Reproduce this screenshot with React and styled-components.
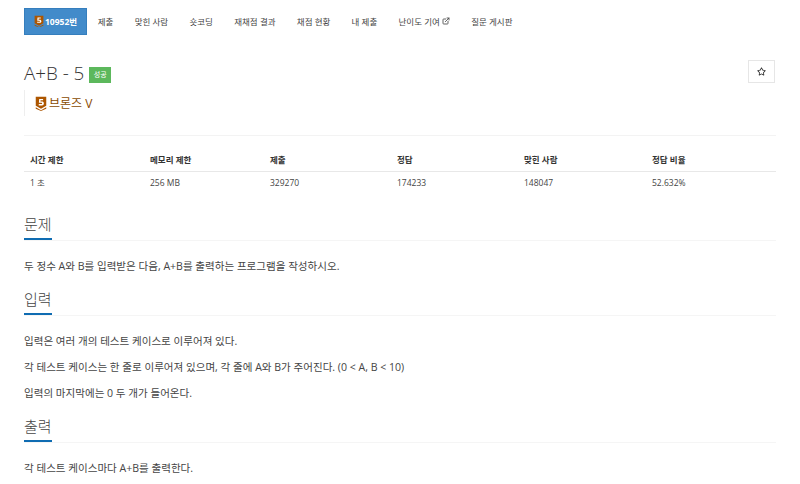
import React from "react";
import styled, { createGlobalStyle } from "styled-components";
import { ExternalLink } from "lucide-react";
import { FaRegStar } from "react-icons/fa";

const GlobalStyle = createGlobalStyle`
  html, body {
    margin: 0;
    padding: 0;
    background: #fff;
    overflow: hidden;
  }
  body {
    font-family: "Open Sans", "Noto Sans CJK KR", sans-serif;
    color: #333;
  }
`;

const Page = styled.div`
  width: 800px;
  height: 484px;
  box-sizing: border-box;
  padding: 8px 24px 0;
  overflow: hidden;
`;

const Tabs = styled.nav`
  display: flex;
  height: 27px;
  align-items: stretch;
`;

const Tab = styled.a`
  display: flex;
  align-items: center;
  gap: ${(p) => (p.$active ? "1px" : "2px")};
  padding: 0 ${(p) => (p.$active ? "9px" : "10.65px")} 1px;
  font-size: 8.5px;
  font-weight: ${(p) => (p.$active ? 700 : 400)};
  color: ${(p) => (p.$active ? "#fff" : "#444")};
  background: ${(p) => (p.$active ? "#428bca" : "transparent")};
  border: ${(p) => (p.$active ? "1px solid #357ebd" : "none")};
  box-sizing: border-box;
  white-space: nowrap;
`;

const TitleRow = styled.div`
  display: flex;
  justify-content: space-between;
  align-items: flex-start;
  margin-top: 26px;
`;

const TitleGroup = styled.div`
  display: flex;
  align-items: center;
  gap: 5px;
  height: 25px;
`;

const Title = styled.h1`
  margin: 0;
  font-size: 18.8px;
  font-weight: 300;
  line-height: 25px;
  color: #333;
`;

const Label = styled.span`
  background: #5cb85c;
  color: #fff;
  font-size: 7px;
  line-height: 16px;
  width: 22px;
  height: 16px;
  margin-top: 3px;
  text-align: center;
`;

const StarButton = styled.button`
  width: 27px;
  height: 23px;
  margin-top: -1px;
  margin-right: 1px;
  padding: 0;
  display: flex;
  align-items: center;
  justify-content: center;
  background: #fff;
  border: 1px solid #e6e6e6;
  color: #222;
  font-size: 9px;
`;

const Tier = styled.div`
  display: flex;
  align-items: center;
  gap: 2px;
  height: 26px;
  margin-top: 4px;
  padding-left: 10px;
  border-left: 1px solid #eee;
  color: #8a4b00;
  font-size: 12px;
`;

const Rule = styled.hr`
  margin: 19px 0 0;
  border: none;
  border-top: 1px solid #f3f3f3;
`;

const InfoTable = styled.div`
  display: grid;
  grid-template-columns: 120px 120px 127px 127px 128px 1fr;
  margin-top: 12px;
`;

const HeadCell = styled.div`
  padding: 0 6px;
  height: 23px;
  line-height: 24px;
  font-size: 8.5px;
  font-weight: 700;
  color: #333;
  border-bottom: 1px solid #e8e8e8;
`;

const Cell = styled.div`
  padding: 0 6px;
  height: 23px;
  line-height: 22px;
  font-size: 8.5px;
  color: #444;
`;

const Section = styled.section`
  margin-top: ${(p) => p.$top || 0}px;
`;

const Heading = styled.div`
  height: 28px;
  border-bottom: 1px solid #f5f5f5;
`;

const HeadingText = styled.h2`
  display: inline-block;
  margin: 0;
  height: 26px;
  line-height: 24px;
  font-size: 15px;
  font-weight: 300;
  color: #444;
  border-bottom: 2px solid #0f6cb2;
`;

const Body = styled.div`
  margin-top: 12px;
`;

const Para = styled.p`
  margin: 0;
  height: 26px;
  line-height: 26px;
  font-size: 10.55px;
  color: #444;
  white-space: nowrap;
`;

function TierIcon({ size }) {
  return (
    <svg width={size} height={size * 1.25} viewBox="0 0 16 20">
      <path d="M1 1h14v12l-7 4-7-4z" fill="#ad5600" />
      <path d="M1 15l7 4 7-4v2l-7 3-7-3z" fill="#ad5600" />
      <path d="M10.8 4H5.6l-.4 5h3.3c.8 0 1 .4 1 .9s-.3.9-1 .9H5v1.7h4.2c1.6 0 2.6-1 2.6-2.6S10.800 7.400 9.200 7.400H7.300l.1-1.700h3.400z" fill="#fff" />
    </svg>
  );
}

const tabs = ["제출", "맞힌 사람", "숏코딩", "재채점 결과", "채점 현황", "내 제출"];
const heads = ["시간 제한", "메모리 제한", "제출", "정답", "맞힌 사람", "정답 비율"];
const values = ["1 초", "256 MB", "329270", "174233", "148047", "52.632%"];

export default function App() {
  return (
    <Page>
      <GlobalStyle />
      <Tabs>
        <Tab $active>
          <TierIcon size={10} />
          10952번
        </Tab>
        {tabs.map((t) => (
          <Tab key={t}>{t}</Tab>
        ))}
        <Tab>
          난이도 기여 <ExternalLink size={8} strokeWidth={2.5} />
        </Tab>
        <Tab>질문 게시판</Tab>
      </Tabs>

      <TitleRow>
        <TitleGroup>
          <Title>A+B - 5</Title>
          <Label>성공</Label>
        </TitleGroup>
        <StarButton>
          <FaRegStar />
        </StarButton>
      </TitleRow>

      <Tier>
        <TierIcon size={12} />
        브론즈 V
      </Tier>

      <Rule />

      <InfoTable>
        {heads.map((h) => (
          <HeadCell key={h}>{h}</HeadCell>
        ))}
        {values.map((v) => (
          <Cell key={v}>{v}</Cell>
        ))}
      </InfoTable>

      <Section $top={17}>
        <Heading>
          <HeadingText>문제</HeadingText>
        </Heading>
        <Body>
          <Para>두 정수 A와 B를 입력받은 다음, A+B를 출력하는 프로그램을 작성하시오.</Para>
        </Body>
      </Section>

      <Section $top={8}>
        <Heading>
          <HeadingText>입력</HeadingText>
        </Heading>
        <Body>
          <Para>입력은 여러 개의 테스트 케이스로 이루어져 있다.</Para>
          <Para>각 테스트 케이스는 한 줄로 이루어져 있으며, 각 줄에 A와 B가 주어진다. (0 &lt; A, B &lt; 10)</Para>
          <Para>입력의 마지막에는 0 두 개가 들어온다.</Para>
        </Body>
      </Section>

      <Section $top={8}>
        <Heading>
          <HeadingText>출력</HeadingText>
        </Heading>
        <Body>
          <Para>각 테스트 케이스마다 A+B를 출력한다.</Para>
        </Body>
      </Section>
    </Page>
  );
}
